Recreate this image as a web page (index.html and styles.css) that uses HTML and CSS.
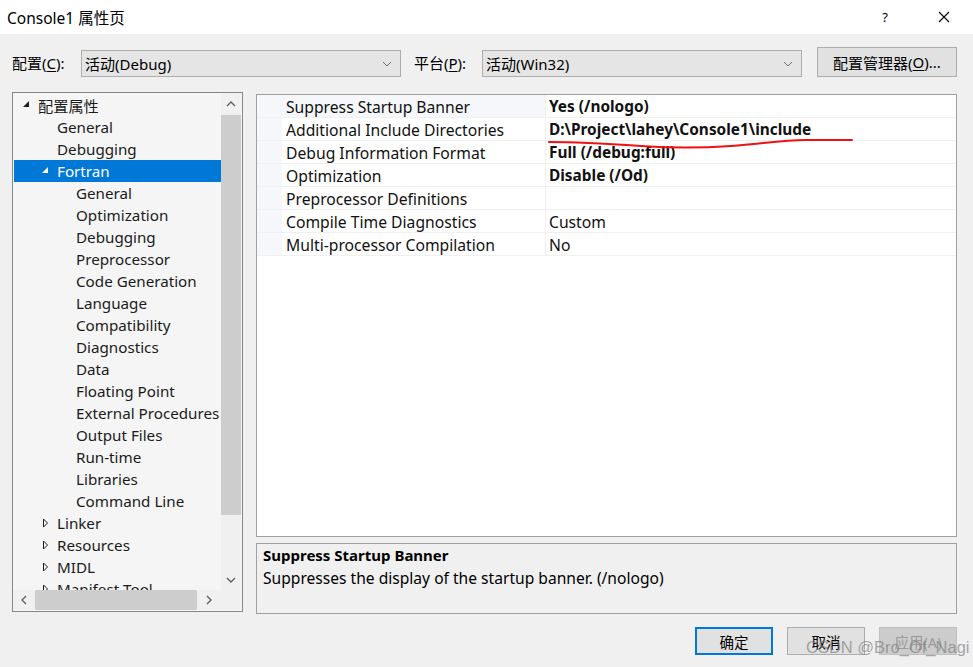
FILE: index.html
```html
<!DOCTYPE html>
<html>
<head>
<meta charset="utf-8">
<title>Console1 属性页</title>
<link rel="stylesheet" href="styles.css">
</head>
<body>
<div class="titlebar">
  <div class="title">Console1 属性页</div>
  <div class="tb-btn help">?</div>
  <div class="tb-btn close"><svg width="12" height="12" viewBox="0 0 12 12"><path d="M1 1 L11 11 M11 1 L1 11" stroke="#000" stroke-width="1.1" fill="none"/></svg></div>
</div>

<div class="content">
  <div class="toolbar">
    <div class="lbl">配置(<u>C</u>):</div>
    <div class="combo"><span>活动(Debug)</span><svg class="chev" width="10" height="6" viewBox="0 0 10 6"><path d="M1 1 L5 5 L9 1" stroke="#6a6a6a" stroke-width="1" fill="none"/></svg></div>
    <div class="lbl lbl2">平台(<u>P</u>):</div>
    <div class="combo"><span>活动(Win32)</span><svg class="chev" width="10" height="6" viewBox="0 0 10 6"><path d="M1 1 L5 5 L9 1" stroke="#6a6a6a" stroke-width="1" fill="none"/></svg></div>
    <div class="btn btn-mgr">配置管理器(<u>O</u>)...</div>
  </div>

  <div class="main">
    <div class="tree">
      <div class="tree-body">
        <div class="trow l0"><span class="tw"><svg width="8" height="8" viewBox="0 0 8 8"><polygon points="7,1 7,7 1,7" fill="#1e1e1e"/></svg></span><span>配置属性</span></div>
        <div class="trow l1"><span class="tw"></span><span>General</span></div>
        <div class="trow l1"><span class="tw"></span><span>Debugging</span></div>
        <div class="trow l1 sel"><span class="tw"><svg width="8" height="8" viewBox="0 0 8 8"><polygon points="7,1 7,7 1,7" fill="#fff"/></svg></span><span>Fortran</span></div>
        <div class="trow l2"><span class="tw"></span><span>General</span></div>
        <div class="trow l2"><span class="tw"></span><span>Optimization</span></div>
        <div class="trow l2"><span class="tw"></span><span>Debugging</span></div>
        <div class="trow l2"><span class="tw"></span><span>Preprocessor</span></div>
        <div class="trow l2"><span class="tw"></span><span>Code Generation</span></div>
        <div class="trow l2"><span class="tw"></span><span>Language</span></div>
        <div class="trow l2"><span class="tw"></span><span>Compatibility</span></div>
        <div class="trow l2"><span class="tw"></span><span>Diagnostics</span></div>
        <div class="trow l2"><span class="tw"></span><span>Data</span></div>
        <div class="trow l2"><span class="tw"></span><span>Floating Point</span></div>
        <div class="trow l2"><span class="tw"></span><span>External Procedures</span></div>
        <div class="trow l2"><span class="tw"></span><span>Output Files</span></div>
        <div class="trow l2"><span class="tw"></span><span>Run-time</span></div>
        <div class="trow l2"><span class="tw"></span><span>Libraries</span></div>
        <div class="trow l2"><span class="tw"></span><span>Command Line</span></div>
        <div class="trow l1"><span class="tw"><svg class="closed" width="7" height="10" viewBox="0 0 7 10"><polygon points="1.5,1 5.5,5 1.5,9" fill="none" stroke="#1e1e1e" stroke-width="1"/></svg></span><span>Linker</span></div>
        <div class="trow l1"><span class="tw"><svg class="closed" width="7" height="10" viewBox="0 0 7 10"><polygon points="1.5,1 5.5,5 1.5,9" fill="none" stroke="#1e1e1e" stroke-width="1"/></svg></span><span>Resources</span></div>
        <div class="trow l1"><span class="tw"><svg class="closed" width="7" height="10" viewBox="0 0 7 10"><polygon points="1.5,1 5.5,5 1.5,9" fill="none" stroke="#1e1e1e" stroke-width="1"/></svg></span><span>MIDL</span></div>
        <div class="trow l1"><span class="tw"><svg class="closed" width="7" height="10" viewBox="0 0 7 10"><polygon points="1.5,1 5.5,5 1.5,9" fill="none" stroke="#1e1e1e" stroke-width="1"/></svg></span><span>Manifest Tool</span></div>
      </div>
      <div class="vscroll">
        <div class="sb-btn"><svg width="10" height="6" viewBox="0 0 10 6"><path d="M1 5 L5 1 L9 5" stroke="#606060" stroke-width="1.4" fill="none"/></svg></div>
        <div class="vthumb"></div>
        <div class="sb-fill"></div>
        <div class="sb-btn"><svg width="10" height="6" viewBox="0 0 10 6"><path d="M1 1 L5 5 L9 1" stroke="#606060" stroke-width="1.4" fill="none"/></svg></div>
      </div>
      <div class="hscroll">
        <div class="sb-btn h"><svg width="6" height="10" viewBox="0 0 6 10"><path d="M5 1 L1 5 L5 9" stroke="#606060" stroke-width="1.4" fill="none"/></svg></div>
        <div class="hthumb"></div>
        <div class="sb-fill"></div>
        <div class="sb-btn h"><svg width="6" height="10" viewBox="0 0 6 10"><path d="M1 1 L5 5 L1 9" stroke="#606060" stroke-width="1.4" fill="none"/></svg></div>
      </div>
      <div class="corner"></div>
    </div>

    <div class="right">
      <div class="pgrid">
        <div class="prow sel"><div class="pm"></div><div class="pl">Suppress Startup Banner</div><div class="pv b">Yes (/nologo)</div></div>
        <div class="prow"><div class="pm"></div><div class="pl">Additional Include Directories</div><div class="pv b">D:\Project\lahey\Console1\include</div></div>
        <div class="prow"><div class="pm"></div><div class="pl">Debug Information Format</div><div class="pv b">Full (/debug:full)</div></div>
        <div class="prow"><div class="pm"></div><div class="pl">Optimization</div><div class="pv b">Disable (/Od)</div></div>
        <div class="prow"><div class="pm"></div><div class="pl">Preprocessor Definitions</div><div class="pv"></div></div>
        <div class="prow"><div class="pm"></div><div class="pl">Compile Time Diagnostics</div><div class="pv">Custom</div></div>
        <div class="prow"><div class="pm"></div><div class="pl">Multi-processor Compilation</div><div class="pv">No</div></div>
        <svg class="scribble" width="700" height="80" viewBox="0 0 700 80"><path d="M292 47 C324 47,354 49,384 51 C414 53,444 53,474 51 C504 49,524 45,549 45 L595 45" stroke="#ee1111" stroke-width="2" fill="none" stroke-linecap="round"/></svg>
      </div>
      <div class="desc">
        <div class="desc-title">Suppress Startup Banner</div>
        <div class="desc-text">Suppresses the display of the startup banner. (/nologo)</div>
      </div>
    </div>
  </div>

  <div class="footer">
    <div class="btn fbtn default">确定</div>
    <div class="btn fbtn">取消</div>
    <div class="btn fbtn disabled">应用(A)</div>
  </div>
</div>
<div class="watermark">CSDN @Bro_Of_Nagi</div>
</body>
</html>
```

FILE: styles.css
```css
* { box-sizing: border-box; }

body {
  margin: 0;
  width: 973px;
  height: 667px;
  overflow: hidden;
  position: relative;
  background: #f0f0f0;
  color: #000;
  font-family: "Noto Sans", "Noto Sans CJK SC", sans-serif;
  font-size: 15px;
}

u { text-decoration: underline; text-underline-offset: 2px; }

.titlebar {
  height: 34px;
  background: #fff;
  display: flex;
  align-items: center;
  padding-left: 7px;
  padding-right: 14px;
}
.title { flex: 1; font-size: 15.5px; }
.tb-btn {
  width: 30px;
  height: 30px;
  display: flex;
  align-items: center;
  justify-content: center;
}
.help { font-size: 13px; margin-right: 29px; }

.content { padding: 13px 16px 0 12px; }

.toolbar {
  display: flex;
  align-items: flex-end;
  height: 30px;
}
.lbl { width: 69px; align-self: center; white-space: nowrap; }
.lbl2 { margin-left: 13px; width: 68px; }
.combo {
  width: 320px;
  height: 27px;
  border: 1px solid #adadad;
  background: #e5e5e5;
  display: flex;
  align-items: center;
  justify-content: space-between;
  padding-left: 3px;
  padding-right: 8px;
}
.btn {
  display: flex;
  align-items: center;
  justify-content: center;
  border: 1px solid #adadad;
  background: #e1e1e1;
}
.btn-mgr { margin-left: auto; width: 140px; height: 30px; }

.main {
  display: grid;
  grid-template-columns: 231px 1fr;
  column-gap: 13px;
  margin-top: 15px;
  height: 522px;
}

/* tree */
.tree {
  height: 520px;
  border: 1px solid #828790;
  background: #f5f5f5;
  display: grid;
  grid-template-columns: 208px 20px;
  grid-template-rows: 497px 20px;
}
.tree-body {
  overflow: hidden;
  padding: 1px 0 0 1px;
  color: #1b1b1b;
  font-size: 15.2px;
}
.trow {
  height: 22px;
  display: flex;
  align-items: center;
  white-space: nowrap;
}
.trow.l0 { padding-left: 8px; }
.trow.l1 { padding-left: 27px; }
.trow.l2 { padding-left: 46px; }
.trow.sel { background: #0078d7; color: #fff; }
.tw {
  width: 16px;
  flex: none;
  display: flex;
  align-items: center;
}
.tw svg { margin-top: -2px; }
.tw svg.closed { margin-left: 1px; margin-top: 0; }

.vscroll, .hscroll { background: #f0f0f0; display: flex; }
.vscroll { flex-direction: column; }
.sb-btn {
  flex: none;
  height: 21px;
  display: flex;
  align-items: center;
  justify-content: center;
}
.sb-btn.h { width: 21px; height: 20px; }
.sb-btn.h:last-child { width: 24px; }
.sb-fill { flex: 1; }
.vthumb { height: 400px; margin-top: 1px; background: #cdcdcd; }
.hthumb { width: 162px; margin-left: 1px; background: #cdcdcd; }
.corner { background: #f0f0f0; }

/* right side */
.right { display: flex; flex-direction: column; }
.pgrid {
  position: relative;
  margin-top: 2px;
  height: 443px;
  border: 1px solid #a0a0a0;
  background: #fff;
  color: #111;
  font-size: 15.7px;
}
.prow {
  display: flex;
  height: 23px;
  border-bottom: 1px solid #f0f0f0;
  white-space: nowrap;
}
.pm { width: 25px; background: #f5f7fa; }
.pl { width: 263px; padding-left: 4px; line-height: 24px; }
.prow.sel .pl { background: #f5f7fa; }
.pv {
  flex: 1;
  border-left: 1px solid #f0f0f0;
  padding-left: 3px;
  line-height: 24px;
}
.pv.b { font-weight: bold; font-size: 15.4px; }
.scribble { position: absolute; left: 0; top: 0; pointer-events: none; }

.desc {
  margin-top: 6px;
  height: 71px;
  border: 1px solid #a0a0a0;
  padding: 0 6px;
}
.desc-title { font-weight: bold; line-height: 22px; font-size: 15px; }
.desc-text { line-height: 24px; font-size: 15.6px; }

.footer {
  display: flex;
  justify-content: flex-end;
  gap: 14px;
  margin-top: 13px;
}
.fbtn { width: 78px; height: 28px; font-size: 14.5px; }
.fbtn.default { border: 2px solid #0078d7; }
.fbtn.disabled { background: #cccccc; border-color: #bfbfbf; color: #9a9a9a; }

.watermark {
  position: absolute;
  left: 806px;
  top: 638px;
  font-family: "Liberation Sans", sans-serif;
  font-size: 16.5px;
  color: rgba(120, 120, 120, 0.65);
  white-space: nowrap;
  pointer-events: none;
}
```
